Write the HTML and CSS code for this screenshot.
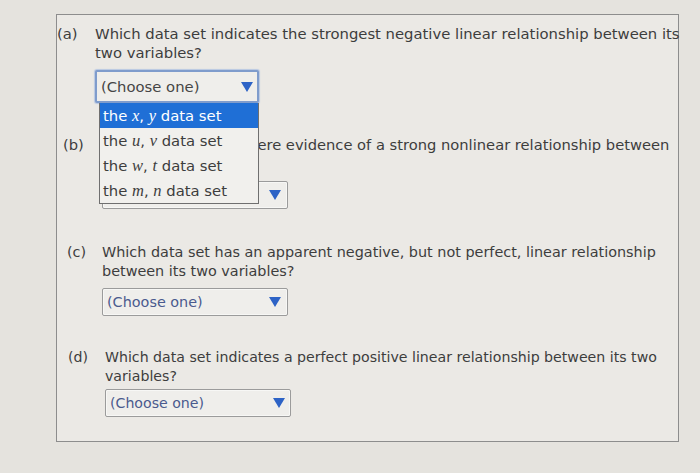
FILE: index.html
```html
<!DOCTYPE html>
<html>
<head>
<meta charset="utf-8">
<link rel="stylesheet" href="styles.css">
</head>
<body>
<div class="page">
  <div class="panel">
    <div class="q q-a">
      <div class="label">(a)</div>
      <div class="body">
        <div class="text">Which data set indicates the strongest negative linear relationship between its two variables?</div>
        <div class="select select-focus">
          <span class="value">(Choose one)</span>
          <span class="tri"></span>
        </div>
      </div>
    </div>
    <div class="q q-b">
      <div class="label">(b)</div>
      <div class="body">
        <div class="text">In what data set is there evidence of a strong nonlinear relationship between its two variables?</div>
        <div class="select select-b">
          <span class="value">(Choose one)</span>
          <span class="tri"></span>
        </div>
      </div>
    </div>
    <div class="q q-c">
      <div class="label">(c)</div>
      <div class="body">
        <div class="text">Which data set has an apparent negative, but not perfect, linear relationship between its two variables?</div>
        <div class="select select-c">
          <span class="value blue">(Choose one)</span>
          <span class="tri"></span>
        </div>
      </div>
    </div>
    <div class="q q-d">
      <div class="label">(d)</div>
      <div class="body">
        <div class="text">Which data set indicates a perfect positive linear relationship between its two variables?</div>
        <div class="select select-d">
          <span class="value blue">(Choose one)</span>
          <span class="tri"></span>
        </div>
      </div>
    </div>
    <ul class="menu">
      <li class="item active">the <i>x</i>, <i>y</i> data set</li>
      <li class="item">the <i>u</i>, <i>v</i> data set</li>
      <li class="item">the <i>w</i>, <i>t</i> data set</li>
      <li class="item">the <i>m</i>, <i>n</i> data set</li>
    </ul>
  </div>
</div>
</body>
</html>
```

FILE: styles.css
```css
html, body {
  margin: 0;
  padding: 0;
}
body {
  background: #e5e3de;
  width: 700px;
  height: 473px;
  overflow: hidden;
  font-family: "DejaVu Sans", Verdana, sans-serif;
  font-size: 14.8px;
  color: #3d3d3d;
}
.page {
  padding-top: 14px;
  padding-left: 56px;
}
.panel {
  position: relative;
  box-sizing: border-box;
  width: 623px;
  height: 428px;
  border: 1px solid #8d8d8d;
  background: #ebe9e5;
}
.q {
  display: flex;
}
.label {
  flex: none;
  line-height: 19px;
}
.body {
  flex: none;
}
.text {
  line-height: 19px;
}
.q-a {
  padding-top: 9px;
}
.q-a .label { width: 38px; }
.q-a .text { width: 588px; }
.q-b {
  padding-top: 32px;
  padding-left: 6px;
  font-size: 14.7px;
}
.q-b .label { width: 39px; }
.q-b .text { width: 576px; }
.q-c {
  padding-top: 34px;
  padding-left: 10px;
  font-size: 14.4px;
}
.q-c .label { width: 35px; }
.q-c .text { width: 566px; }
.q-d {
  padding-top: 32px;
  padding-left: 11px;
  font-size: 14.15px;
}
.q-d .label { width: 37px; }
.q-d .text { width: 562px; }

.select {
  box-sizing: border-box;
  display: flex;
  align-items: center;
  justify-content: space-between;
  height: 28px;
  width: 186px;
  padding: 0 6px 0 4px;
  background: #efeeeb;
  border: 1px solid #9b9b9b;
  border-radius: 2px;
  box-shadow: inset 0 0 0 1px #f7f7f5;
}
.select-focus {
  width: 164px;
  height: 33px;
  margin-top: 8px;
  border: 2px solid #7f9ccc;
  box-shadow: 0 0 1px 1px #b9c8e2;
  padding-left: 4px;
  padding-right: 4px;
}
.select-b {
  margin-top: 8px;
}
.select-c {
  margin-top: 7px;
}
.select-d {
  margin-top: 3px;
  padding-right: 5px;
}
.value {
  color: #454545;
}
.value.blue {
  color: #4a5a8e;
}
.tri {
  width: 0;
  height: 0;
  border-left: 6px solid transparent;
  border-right: 6px solid transparent;
  border-top: 10px solid #2d63c6;
}
.menu {
  position: absolute;
  left: 42px;
  top: 88px;
  width: 160px;
  margin: 0;
  padding: 0;
  list-style: none;
  box-sizing: border-box;
  background: #f1f0ed;
  border: 1px solid #6f6f6f;
  border-top: none;
  font-size: 14.8px;
}
.item {
  height: 25px;
  line-height: 25px;
  padding-left: 3px;
  color: #3d3d3d;
}
.item i {
  font-family: "Liberation Serif", "Times New Roman", serif;
  font-size: 16.5px;
}
.item.active {
  background: #1f6fd6;
  color: #ffffff;
}
```
